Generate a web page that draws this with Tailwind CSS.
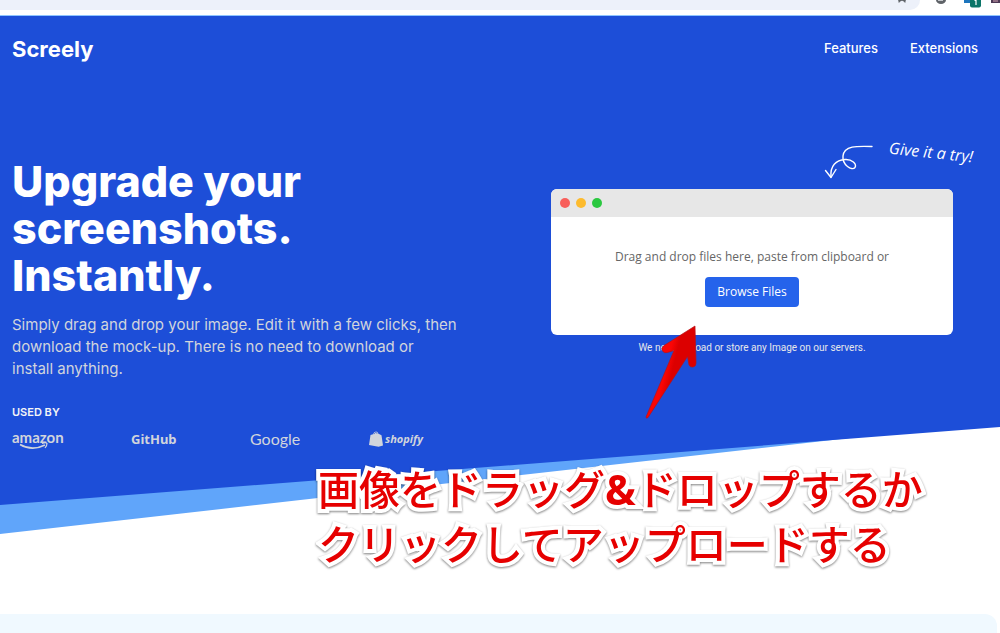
<!DOCTYPE html>
<html lang="en">
<head>
    <meta charset="UTF-8">
    <meta name="viewport" content="width=device-width, initial-scale=1.0">
    <title>Screely</title>
    <script src="https://cdn.jsdelivr.net/npm/@tailwindcss/browser@4"></script>
</head>
<body class="relative min-h-screen flex flex-col overflow-x-hidden bg-white font-['Inter','Liberation_Sans',sans-serif]">
    <!-- Browser toolbar -->
    <div class="flex h-4 items-start justify-between border-b border-blue-300 bg-white">
        <div class="flex h-[10px] w-[92%] justify-end rounded-br-xl bg-[#edf1fa] pr-3">
            <svg class="h-[3px] w-3" viewBox="0 0 12 3"><path d="M2 0h2.5L2.6 2.4M10 0H7.5l1.9 2.4M4 1l2-1 2 1" fill="none" stroke="#5f6368" stroke-width="1.3"/></svg>
        </div>
        <svg class="h-2 w-[66px] shrink-0" viewBox="0 0 66 8">
            <path d="M2 0a5 4 0 0 0 10 0z" fill="#5f6368"/>
            <path d="M4 0.500h5" stroke="#c4c7cb"/>
            <path d="M30 0h6v3h-6z" fill="#1d75bd"/>
            <rect x="36" y="-4" width="11" height="11.500" rx="2" fill="#0b7568"/>
            <path d="M42 0v5M40.500 0.500h1.500" stroke="#fff" stroke-width="1.200"/>
            <path d="M57 0h9v3h-9z" fill="#4d3a55"/>
            <path d="M59 1h5" stroke="#d7a4b4"/>
        </svg>
    </div>

    <!-- Hero -->
    <section class="relative isolate h-[518px] text-white">
        <svg class="absolute inset-0 -z-10 h-full w-full" viewBox="0 0 1000 518" preserveAspectRatio="none">
            <path d="M0 0H1000V405L0 518z" fill="#60a5fa"/>
            <path d="M0 0H1000V411L0 489z" fill="#1d4ed8"/>
        </svg>

        <header class="flex h-[66px] items-center justify-between pr-[22px] pl-3">
            <a href="#" class="text-[22px] font-bold">Screely</a>
            <nav class="flex gap-8 text-[13px] font-medium">
                <a href="#features">Features</a>
                <a href="#extensions">Extensions</a>
            </nav>
        </header>

        <div class="grid grid-cols-2">
            <div class="pt-[76px] pl-3">
                <h1 class="text-[43px] leading-[47px] font-extrabold">Upgrade your<br>screenshots.<br>Instantly.</h1>
                <p class="mt-[15px] max-w-[446px] text-[15px] leading-[22px] text-gray-300">Simply drag and drop your image. Edit it with a few clicks, then download the mock-up. There is no need to download or install anything.</p>
                <h2 class="mt-6 text-[11px] leading-4 font-semibold text-gray-100">USED BY</h2>
                <div class="mt-[7px] grid h-6 max-w-[476px] grid-cols-4 items-center text-gray-300">
                    <div class="relative pb-1 font-['Lato'] text-[15px] leading-5 font-bold">amazon
                        <svg class="absolute top-[13px] left-1 h-[10px] w-9" viewBox="0 0 36 10" fill="none" stroke="currentColor">
                            <path d="M4 4.500Q16 11.500 29 5" stroke-width="1.500"/>
                            <path d="M26 3.500q4.500-1.500 5 0q0 2-2 4.500" stroke-width="1.200"/>
                        </svg>
                    </div>
                    <div class="font-['Noto_Sans'] text-[13px] leading-6 font-bold">GitHub</div>
                    <div class="font-['Lato'] text-[16px] leading-6">Google</div>
                    <div class="flex items-center gap-[2px]">
                        <svg class="h-4 w-[14px] shrink-0" viewBox="0 0 14 16">
                            <path d="M1.500 4L4 3.300Q5 .7 7 .5Q8.800.6 9.200 2.500L11 3.500l1.500.7L14 14.500 9.500 15.800 0 14z" fill="currentColor"/>
                            <path d="M5 3.200Q5.800 1.500 7 1.300Q8 1.500 8 2.800" fill="none" stroke="#1d4ed8" stroke-width=".6"/>
                        </svg>
                        <span class="font-['Open_Sans'] text-[11px] leading-6 font-bold italic">shopify</span>
                    </div>
                </div>
            </div>

            <div class="pt-[50px] pr-[47px] pl-[51px]">
                <div class="-mr-5 flex h-[57px] items-start justify-end gap-[14px]">
                    <svg class="mt-2 h-10 w-[52px]" viewBox="0 0 52 40" fill="none" stroke="#fff" stroke-width="1.400" stroke-linecap="round" stroke-linejoin="round">
                        <path d="M49 6.500C34 6 21 5.500 20 16C19 25 29 31 32 27.500C34 24 29 19 22 19.500C13 20 7 26 8 37"/>
                        <path d="M2.500 30.500L8 37.500L13 29.500"/>
                    </svg>
                    <span class="mt-2 rotate-6 font-['Open_Sans'] text-[16px] leading-6 italic">Give it a try!</span>
                </div>
                <div class="overflow-hidden rounded-md bg-white">
                    <div class="flex h-7 items-center gap-[6px] bg-[#e7e7e7] pl-[9px]">
                        <span class="size-[10px] rounded-full bg-[#f85f5b]"></span>
                        <span class="size-[10px] rounded-full bg-[#fdbb2e]"></span>
                        <span class="size-[10px] rounded-full bg-[#2bc840]"></span>
                    </div>
                    <div class="flex h-[118px] flex-col items-center pt-[30px] font-['Open_Sans']">
                        <p class="text-[12px] leading-5 text-[#666]">Drag and drop files here, paste from clipboard or</p>
                        <button type="button" class="mt-[10px] h-[30px] rounded-[4px] bg-[#2563eb] px-3 text-[12px] font-medium text-white">Browse Files</button>
                    </div>
                </div>
                <p class="mt-[5px] text-center font-['Roboto'] text-[10px] leading-4 text-gray-200">We never upload or store any Image on our servers.</p>
            </div>
        </div>
    </section>

    <section class="mt-20 mr-[3px] flex-1 rounded-tr-xl bg-[#f0f9ff]"></section>

    <!-- Annotation over the page -->
    <svg class="absolute top-[320px] left-[640px] h-[104px] w-[64px]" viewBox="0 0 64 104">
        <defs>
            <linearGradient id="red" x1="0" y1="0" x2="1" y2=".45">
                <stop offset=".5" stop-color="#fb0505"/>
                <stop offset=".62" stop-color="#dc0000"/>
            </linearGradient>
        </defs>
        <path d="M55 6L24 25.500Q20.500 28 22.500 31Q24 33.500 27.500 32.500L34 30.500L6 97Q6 99 8 97.500L47.500 36.500L49 45Q50 47.500 53 47Q56 46.500 56 43z" fill="url(#red)" stroke="#b51218" stroke-width=".7"/>
    </svg>
    <p class="absolute top-[461px] left-[318px] text-[41px] leading-[53px] font-medium whitespace-nowrap text-[#e60000] [paint-order:stroke_fill] [-webkit-text-stroke:8px_white] drop-shadow-[0_1px_1px_rgba(0,0,0,0.5)] font-['Noto_Sans_CJK_JP',sans-serif]" lang="ja">画像をドラッグ<span class="font-['Noto_Sans'] font-bold">&amp;</span>ドロップするか<br>クリックしてアップロードする</p>
</body>
</html>
